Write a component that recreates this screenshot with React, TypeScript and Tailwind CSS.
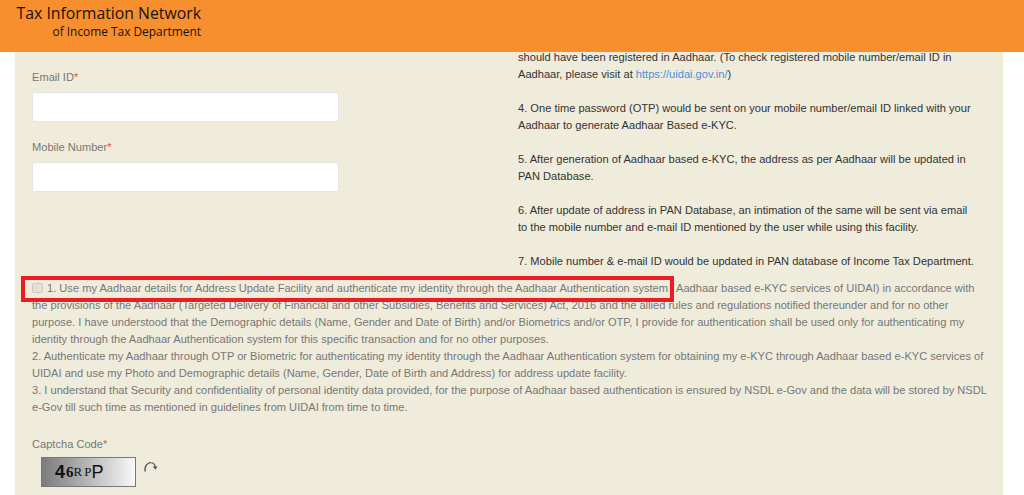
import React from "react";

function Label({ children }: { children: React.ReactNode }) {
  return (
    <label className="block text-[11.1px] leading-[17px] text-[#777]">
      {children}
      <span className="text-[#e2574c]">*</span>
    </label>
  );
}

function TextInput() {
  return (
    <input
      type="text"
      className="mt-[6px] block h-[30px] w-[307px] rounded-[2px] border border-[#e4e4e4] bg-white"
    />
  );
}

function RefreshIcon() {
  return (
    <svg width="16" height="16" viewBox="0 0 16 16" fill="none" className="ml-[7px] mt-[2px]">
      <path d="M2.2 12.5 C1 7 5 3.2 8 3.6 C10.5 3.8 12 6 12.3 8" stroke="#555" strokeWidth="1.3" />
      <path d="M9.8 7.6 L14.6 7.6 L12.3 10.8 Z" fill="#555" />
    </svg>
  );
}

export default function App() {
  return (
    <div className="h-[495px] w-[1024px] overflow-hidden bg-white font-['Liberation_Sans',Arial,sans-serif]">
      {/* Orange banner */}
      <header className="relative z-10 h-[52px] bg-[#f78f2e]">
        <div className="ml-[16px] flex w-[185px] flex-col items-end pt-[2px] font-['Open_Sans','Noto_Sans',sans-serif] text-[#1a1208]">
          <span className="text-[15.8px] leading-[22px] whitespace-nowrap">Tax Information Network</span>
          <span className="text-[11.9px] leading-[14px] whitespace-nowrap">of Income Tax Department</span>
        </div>
      </header>

      <main className="ml-[15px] h-[443px] w-[988px] bg-[#efecdc] pl-[17px]">
        <div className="flex">
          <div className="w-[486px] pt-[17px]">
            <Label>Email ID</Label>
            <TextInput />
            <div className="mt-[17px]">
              <Label>Mobile Number</Label>
              <TextInput />
            </div>
          </div>

          <div className="-mt-[3px] w-[470px] text-[11.1px] leading-[17px] text-[#333]">
            <p>
              should have been registered in Aadhaar. (To check registered mobile number/email ID in
              <br />
              Aadhaar, please visit at <a className="text-[#4a90d9]">https://uidai.gov.in/</a>)
            </p>
            <p className="mt-[17px]">
              4. One time password (OTP) would be sent on your mobile number/email ID linked with your
              <br />
              Aadhaar to generate Aadhaar Based e-KYC.
            </p>
            <p className="mt-[17px]">
              5. After generation of Aadhaar based e-KYC, the address as per Aadhaar will be updated in
              <br />
              PAN Database.
            </p>
            <p className="mt-[17px]">
              6. After update of address in PAN Database, an intimation of the same will be sent via email
              <br />
              to the mobile number and e-mail ID mentioned by the user while using this facility.
            </p>
            <p className="mt-[17px] whitespace-nowrap">
              7. Mobile number &amp; e-mail ID would be updated in PAN database of Income Tax Department.
            </p>
          </div>
        </div>

        {/* Consent block */}
        <div className="relative mt-[10px] whitespace-nowrap text-[11.1px] leading-[17px] text-[#777]">
          <div className="flex items-center">
            <span className="mr-[4px] -mt-[2px] h-[10px] w-[11px] shrink-0 rounded-[2px] border border-[#c9c9c9] bg-[#e4e2d8]" />
            <span>1. Use my Aadhaar details for Address Update Facility and authenticate my identity through the Aadhaar Authentication system</span>
            <span className="ml-[8px]">Aadhaar based e-KYC services of UIDAI) in accordance with</span>
          </div>
          <div>the provisions of the Aadhaar (Targeted Delivery of Financial and other Subsidies, Benefits and Services) Act, 2016 and the allied rules and regulations notified thereunder and for no other</div>
          <div>purpose. I have understood that the Demographic details (Name, Gender and Date of Birth) and/or Biometrics and/or OTP, I provide for authentication shall be used only for authenticating my</div>
          <div>identity through the Aadhaar Authentication system for this specific transaction and for no other purposes.</div>
          <div>2. Authenticate my Aadhaar through OTP or Biometric for authenticating my identity through the Aadhaar Authentication system for obtaining my e-KYC through Aadhaar based e-KYC services of</div>
          <div>UIDAI and use my Photo and Demographic details (Name, Gender, Date of Birth and Address) for address update facility.</div>
          <div>3. I understand that Security and confidentiality of personal identity data provided, for the purpose of Aadhaar based authentication is ensured by NSDL e-Gov and the data will be stored by NSDL</div>
          <div>e-Gov till such time as mentioned in guidelines from UIDAI from time to time.</div>

          {/* Red annotation box drawn over the first line */}
          <div className="absolute -left-[11px] -top-[4px] h-[26px] w-[653px] border-4 border-[#ed1c24]" />
        </div>

        <div className="mt-[20px]">
          <Label>Captcha Code</Label>
          <div className="ml-[9px] mt-[4px] flex items-start">
            <div className="flex h-[30px] w-[95px] items-end border border-[#777] bg-gradient-to-r from-[#7c7c7c] to-[#f8f8f8] pb-[6px] pl-[13px] font-['Liberation_Serif',serif] leading-[16px] text-[#111]">
              <span className="font-['Liberation_Sans',sans-serif] text-[18px] font-bold">4</span>
              <span className="ml-[1px] text-[15px] font-bold">6</span>
              <span className="text-[13px]">R</span>
              <span className="ml-[2px] text-[13px]">P</span>
              <span className="font-['Liberation_Sans',sans-serif] text-[18px]">P</span>
            </div>
            <RefreshIcon />
          </div>
        </div>
      </main>
    </div>
  );
}
